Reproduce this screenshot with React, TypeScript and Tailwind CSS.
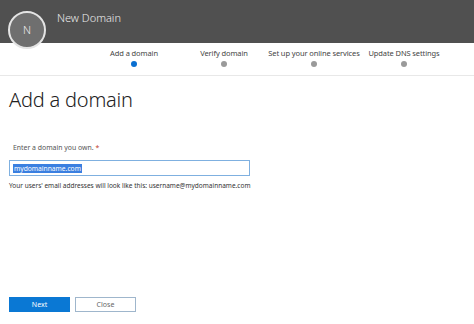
export default function App() {
  const steps = [
    { label: "Add a domain", active: true },
    { label: "Verify domain", active: false },
    { label: "Set up your online services", active: false },
    { label: "Update DNS settings", active: false },
  ];

  return (
    <div className="w-[474px] h-[324px] bg-white overflow-hidden flex flex-col font-['Noto_Sans',sans-serif] text-[#333]">
      {/* header */}
      <div className="h-[43px] shrink-0 bg-[#505050] flex items-start">
        <div className="relative z-10 mt-[11px] ml-[8px] w-[38px] h-[38px] rounded-full bg-[#6f6f6f] border-2 border-[#e4e4e4] flex items-center justify-center text-[#eeeeee] text-[11px] font-light">
          N
        </div>
        <div className="ml-[11px] mt-[10px] text-[11px] text-[#ececec] font-light">New Domain</div>
      </div>

      {/* steps */}
      <div className="h-[33px] shrink-0 border-b border-[#e8e8e8] flex pl-[89px] pt-[5px]">
        {steps.map((s, i) => (
          <div key={i} className="w-[90px] flex flex-col items-center">
            <span className="text-[7.5px] leading-[10px] text-[#444] whitespace-nowrap tracking-[-0.1px]">{s.label}</span>
            <span
              className={
                s.active
                  ? "mt-[3px] w-[6px] h-[6px] rounded-full bg-[#0a6fd1]"
                  : "mt-[3px] w-[6px] h-[6px] rounded-full bg-[#9a9a9a]"
              }
            />
          </div>
        ))}
      </div>

      {/* body */}
      <div className="flex-1 flex flex-col px-[9px]">
        <h1 className="mt-[11px] text-[20px] leading-[26px] font-light text-[#222] tracking-[-0.2px]">Add a domain</h1>

        <label className="mt-[30px] ml-[4px] text-[6.9px] leading-[10px] text-[#555]">
          Enter a domain you own. <span className="text-[#c0392b]">*</span>
        </label>

        <div className="mt-[7px] w-[241px] h-[16px] border border-[#7fb0e0] flex items-center px-[3px]">
          <span className="bg-[#3a7fe0] text-white text-[6.7px] leading-[9px] px-px">mydomainname.com</span>
        </div>

        <p className="mt-[5px] text-[6.5px] leading-[10px] text-[#333] whitespace-nowrap">
          Your users' email addresses will look like this: username@mydomainname.com
        </p>

        <div className="mt-auto mb-[12px] flex gap-[5px]">
          <button className="w-[61px] h-[15px] bg-[#0a78d4] text-white text-[7px] leading-none">Next</button>
          <button className="w-[61px] h-[15px] bg-white border border-[#9fb6cc] text-[#666] text-[7px] leading-none">Close</button>
        </div>
      </div>
    </div>
  );
}
